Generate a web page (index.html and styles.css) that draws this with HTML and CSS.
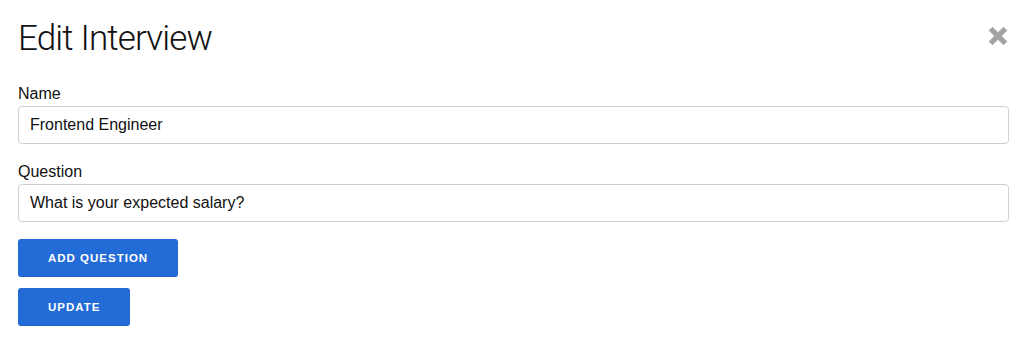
FILE: index.html
```html
<!DOCTYPE html>
<html>
<head>
<meta charset="utf-8">
<link rel="stylesheet" href="styles.css">
</head>
<body>
<div class="modal">
  <div class="header">
    <h1 class="title">Edit Interview</h1>
    <button class="close" aria-label="Close">
      <svg width="20" height="20" viewBox="0 0 20 20"><path d="M4.5 1.2 L10 6.7 L15.5 1.2 L18.8 4.5 L13.3 10 L18.8 15.5 L15.5 18.8 L10 13.3 L4.5 18.8 L1.2 15.5 L6.7 10 L1.2 4.5 Z" fill="#a3a3a3" stroke="#a3a3a3" stroke-width="1" stroke-linejoin="round"/></svg>
    </button>
  </div>
  <div class="field">
    <label class="label">Name</label>
    <input class="input" type="text" value="Frontend Engineer">
  </div>
  <div class="field">
    <label class="label">Question</label>
    <input class="input" type="text" value="What is your expected salary?">
  </div>
  <div class="actions">
    <button class="btn">Add Question</button>
    <button class="btn">Update</button>
  </div>
</div>
</body>
</html>
```
FILE: styles.css
```css
html, body {
  margin: 0;
  padding: 0;
  background: #fff;
}
body {
  font-family: "Liberation Sans", Arial, sans-serif;
  color: #111;
}
.modal {
  padding: 16px 14px 0 18px;
}
.header {
  display: flex;
  justify-content: space-between;
  align-items: flex-start;
  height: 68px;
}
.title {
  margin: 0;
  font-family: Roboto, "Liberation Sans", Arial, sans-serif;
  font-weight: 300;
  font-size: 35px;
  line-height: 46px;
  letter-spacing: -0.85px;
  color: #111;
}
.close {
  border: 0;
  background: none;
  padding: 0;
  margin: 10px 1px 0 0;
  width: 20px;
  height: 20px;
  cursor: pointer;
}
.close svg { display: block; }
.field {
  display: flex;
  flex-direction: column;
  margin-bottom: 18px;
}
.label {
  font-size: 16px;
  line-height: 20px;
  margin-bottom: 2px;
}
.input {
  box-sizing: border-box;
  height: 38px;
  border: 1px solid #cfcfcf;
  border-radius: 4px;
  padding: 0 11px;
  font-family: "Liberation Sans", Arial, sans-serif;
  font-size: 16px;
  color: #111;
  background: #fff;
  outline: none;
}
.actions {
  display: flex;
  flex-direction: column;
  align-items: flex-start;
  gap: 11px;
  margin-top: -1px;
}
.btn {
  height: 38px;
  border: 0;
  border-radius: 3px;
  background: #236bd6;
  color: #fff;
  font-family: "Liberation Sans", Arial, sans-serif;
  font-weight: bold;
  font-size: 11.5px;
  letter-spacing: 1px;
  text-transform: uppercase;
  padding: 0 30px;
  box-shadow: inset 0 -1px 0 rgba(0,0,0,0.08);
}
```
